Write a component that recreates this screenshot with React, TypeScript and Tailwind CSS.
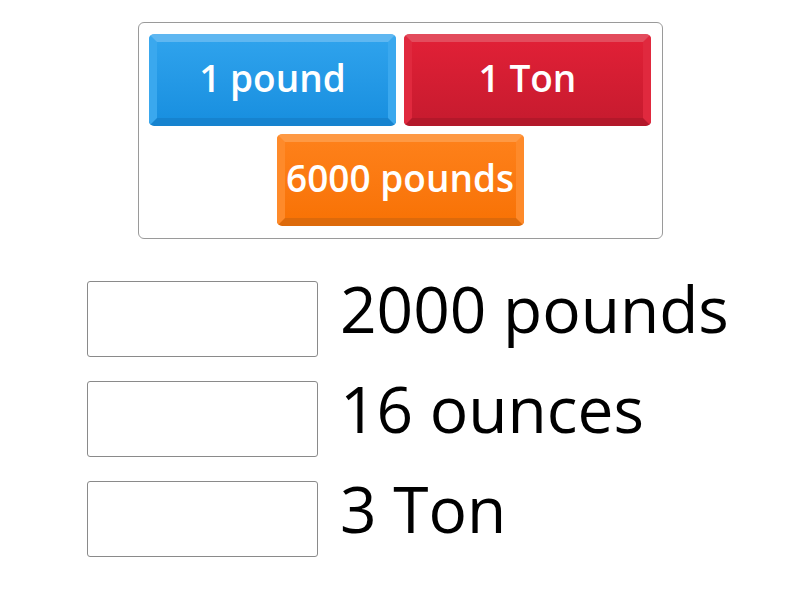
import React from 'react';

interface Tile {
  label: string;
  face: string;
}

// bevelled answer tiles: light top edge, darker bottom edge, gradient face
const tiles: Tile[] = [
  {
    label: '1 pound',
    face: 'bg-gradient-to-b from-[#2ea2ec] to-[#1990e0] border-t-[#5fb7f1] border-x-[#3aa8ee] border-b-[#1683cf]',
  },
  {
    label: '1 Ton',
    face: 'bg-gradient-to-b from-[#e02036] to-[#c81b2f] border-t-[#e34c5d] border-x-[#e0293e] border-b-[#b3182a]',
  },
  {
    label: '6000 pounds',
    face: 'bg-gradient-to-b from-[#fe8019] to-[#f87306] border-t-[#fe9944] border-x-[#fe8a2a] border-b-[#dd6a0b]',
  },
];

const targets = ['2000 pounds', '16 ounces', '3 Ton'];

const TileButton: React.FC<{ tile: Tile }> = ({ tile }) => (
  <div
    className={`w-[247px] h-[92px] rounded-[5px] border-[8px] flex items-center justify-center text-white font-semibold text-[37px] leading-none whitespace-nowrap ${tile.face}`}
  >
    <span className="-mx-3 -mt-[6px]">{tile.label}</span>
  </div>
);

const App: React.FC = () => {
  return (
    <div
      className="w-[800px] h-[600px] bg-white flex flex-col items-center pt-[22px]"
      style={{ fontFamily: '"Open Sans", "Noto Sans", sans-serif' }}
    >
      <div className="w-[525px] h-[217px] border border-[#9a9a9a] rounded-[6px] px-[10px] pt-[11px] flex flex-col items-center gap-[8px]">
        <div className="flex gap-[8px]">
          <TileButton tile={tiles[0]} />
          <TileButton tile={tiles[1]} />
        </div>
        <TileButton tile={tiles[2]} />
      </div>

      <div className="self-start ml-[87px] mt-[42px] flex flex-col gap-[24px]">
        {targets.map((t) => (
          <div key={t} className="flex items-center gap-[22px]">
            <div className="w-[231px] h-[76px] border border-[#8a8a8a] rounded-[3px] bg-white" />
            <span className="text-[64px] leading-none text-black -mt-[20px] whitespace-nowrap">{t}</span>
          </div>
        ))}
      </div>
    </div>
  );
};

export default App;
